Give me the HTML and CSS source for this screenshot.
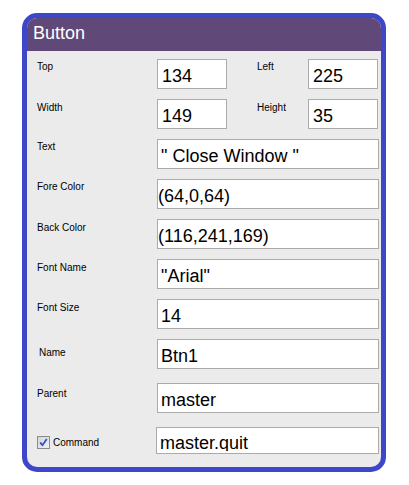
FILE: index.html
```html
<!DOCTYPE html>
<html>
<head>
<meta charset="utf-8">
<link rel="stylesheet" href="styles.css">
</head>
<body>
<div class="window">
  <div class="title">Button</div>
  <div class="content">
    <div class="row">
      <div class="lbl">Top</div>
      <div class="field small">134</div>
      <div class="lbl lbl2">Left</div>
      <div class="field small">225</div>
    </div>
    <div class="row">
      <div class="lbl off3">Width</div>
      <div class="field small">149</div>
      <div class="lbl lbl2 off3">Height</div>
      <div class="field small">35</div>
    </div>
    <div class="row">
      <div class="lbl">Text</div>
      <div class="field wide">" Close Window "</div>
    </div>
    <div class="row">
      <div class="lbl">Fore Color</div>
      <div class="field wide tight">(64,0,64)</div>
    </div>
    <div class="row">
      <div class="lbl off3">Back Color</div>
      <div class="field wide tight">(116,241,169)</div>
    </div>
    <div class="row">
      <div class="lbl off3">Font Name</div>
      <div class="field wide">"Arial"</div>
    </div>
    <div class="row">
      <div class="lbl off3">Font Size</div>
      <div class="field wide">14</div>
    </div>
    <div class="row">
      <div class="lbl off8 indent">Name</div>
      <div class="field wide">Btn1</div>
    </div>
    <div class="row spaced">
      <div class="lbl off5">Parent</div>
      <div class="field wide">master</div>
    </div>
    <div class="row spaced">
      <div class="lbl cmd">
        <svg class="check" width="13" height="13" viewBox="0 0 13 13">
          <defs>
            <linearGradient id="cbg" x1="0" y1="0" x2="1" y2="1">
              <stop offset="0" stop-color="#d2d4da"/>
              <stop offset="1" stop-color="#f2f2f4"/>
            </linearGradient>
          </defs>
          <rect x="0.5" y="0.5" width="12" height="12" fill="url(#cbg)" stroke="#8c8c8c"/>
          <path d="M3.2 6.4 L5.4 9.3 L9.8 2.9" fill="none" stroke="#3554c4" stroke-width="1.8" stroke-linejoin="round"/>
        </svg>
        <span>Command</span>
      </div>
      <div class="field wide short"><div class="clip">master.quit</div></div>
    </div>
  </div>
</div>
</body>
</html>
```
FILE: styles.css
```css
html, body {
  margin: 0;
  padding: 0;
  background: #ffffff;
}

.window {
  box-sizing: border-box;
  margin: 13px 0 0 22px;
  width: 364px;
  height: 459px;
  border: 5px solid #3f47c9;
  border-radius: 15px;
  background: #ebebeb;
  overflow: hidden;
  font-family: "Liberation Sans", Arial, sans-serif;
}

.title {
  box-sizing: border-box;
  height: 33px;
  padding: 5px 0 0 6px;
  background: #604878;
  color: #ffffff;
  font-size: 18px;
  line-height: 20px;
}

.content {
  padding: 8px 0 0 10px;
}

.row {
  display: flex;
  align-items: flex-start;
  margin-bottom: 10px;
}

.row.spaced {
  margin-top: 14px;
}

.lbl {
  box-sizing: border-box;
  width: 120px;
  padding-top: 2px;
  font-size: 10px;
  line-height: 12px;
  color: #000000;
}

.lbl2 {
  width: 51px;
  margin-left: 30px;
}

.off3 { padding-top: 3px; }
.off5 { padding-top: 5px; }
.off8 { padding-top: 8px; }
.indent { padding-left: 2px; }

.cmd {
  display: flex;
  align-items: center;
  gap: 3px;
  width: 119px;
  padding-top: 9px;
}

.check {
  display: block;
  flex: none;
}

.field {
  box-sizing: border-box;
  height: 30px;
  padding: 6px 0 2px 3px;
  background: #ffffff;
  border: 1px solid #ababab;
  font-size: 18px;
  line-height: 20px;
  color: #000000;
  white-space: nowrap;
  overflow: hidden;
}

.small { width: 70px; padding-left: 4px; }
.wide { width: 222px; }
.tight { padding-left: 0; }

.field.short {
  width: 223px;
  height: 27px;
  padding-top: 5px;
  padding-bottom: 2px;
}

.clip {
  height: 18px;
  overflow: hidden;
}
```
